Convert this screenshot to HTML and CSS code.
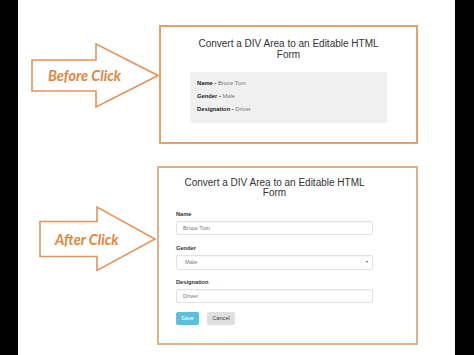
FILE: index.html
```html
<!DOCTYPE html>
<html>
<head>
<meta charset="utf-8">
<link rel="stylesheet" href="styles.css">
</head>
<body>
<div class="slide">
  <div class="row row-before">
    <svg class="arrow" width="141" height="119" viewBox="0 0 141 119">
      <polygon points="14,35 78,35 78,19 140,50.5 78,82 78,66 14,66" fill="#fff" stroke="#e3955a" stroke-width="1.6" stroke-linejoin="miter"/>
      <text x="30" y="55.5" class="arrow-label">Before Click</text>
    </svg>
    <div class="card card-before">
      <div class="inner inner-center">
        <h1 class="title">Convert a DIV Area to an Editable HTML Form</h1>
        <div class="panel">
          <p><b>Name -</b> <span>Bruce Tom</span></p>
          <p><b>Gender -</b> <span>Male</span></p>
          <p><b>Designation -</b> <span>Driver</span></p>
        </div>
      </div>
    </div>
  </div>
  <div class="row row-after">
    <svg class="arrow" width="139" height="179" viewBox="0 0 139 179">
      <polygon points="22,55.5 79,55.5 79,41 137,73 79,104.5 79,90.5 22,90.5" fill="#fff" stroke="#e3955a" stroke-width="1.6" stroke-linejoin="miter"/>
      <text x="37" y="78.5" class="arrow-label">After Click</text>
    </svg>
    <div class="card card-after">
      <form class="inner inner-left">
        <h1 class="title title-sm">Convert a DIV Area to an Editable HTML Form</h1>
        <div class="group">
          <label>Name</label>
          <input class="control" type="text" value="Bruce Tom">
        </div>
        <div class="group">
          <label>Gender</label>
          <div class="select-wrap">
            <select class="control select"><option>Male</option></select>
          </div>
        </div>
        <div class="group">
          <label>Designation</label>
          <input class="control" type="text" value="Driver">
        </div>
        <div class="buttons">
          <button type="button" class="btn btn-save">Save</button>
          <button type="button" class="btn btn-cancel">Cancel</button>
        </div>
      </form>
    </div>
  </div>
</div>
</body>
</html>
```

FILE: styles.css
```css
* { box-sizing: border-box; }
html, body { margin: 0; padding: 0; }
body {
  background: #000;
  width: 474px;
  height: 355px;
  overflow: hidden;
  font-family: "Liberation Sans", Arial, sans-serif;
}
.slide {
  margin-left: 18px;
  width: 437px;
  height: 355px;
  background: #fff;
  padding-top: 25px;
  display: flex;
  flex-direction: column;
  gap: 22px;
}
.row {
  display: flex;
  align-items: flex-start;
}
.arrow { display: block; flex: none; }
.arrow-label {
  font-family: Lato, "Open Sans", sans-serif;
  font-weight: 700;
  font-style: italic;
  font-size: 14.5px;
  fill: #e0863c;
}
.card {
  background: #fff;
  flex: none;
}
.card-before {
  width: 259px;
  height: 119px;
  border: 2px solid #e6a266;
  padding-top: 10.5px;
}
.card-after {
  width: 261px;
  height: 179px;
  border: 2px solid #dcb482;
  padding-top: 9.5px;
  padding-left: 17px;
}
.inner { width: 197px; margin: 0; }
.inner-center { margin: 0 auto; }
.title {
  margin: 0;
  font-weight: 400;
  font-size: 10px;
  line-height: 11px;
  color: #333;
  text-align: center;
  padding: 0 6px;
}
.title-sm { line-height: 10.5px; }
.panel {
  margin-top: 12.5px;
  background: #f0f0f0;
  height: 51px;
  padding: 5px 7px 0;
}
.panel p {
  margin: 0;
  font-size: 5.8px;
  line-height: 13px;
  color: #777;
}
.panel b { color: #222; }
.group { margin-bottom: 8.5px; }
.group:first-of-type { margin-top: 11.5px; }
.group label {
  display: block;
  font-size: 5.7px;
  font-weight: 700;
  line-height: 8px;
  color: #333;
  margin-bottom: 3px;
}
.control {
  display: block;
  width: 197px;
  height: 14px;
  margin: 0;
  padding: 0 6px;
  border: 1px solid #e2e2e2;
  border-radius: 2px;
  background: #fff;
  font-family: "Liberation Sans", Arial, sans-serif;
  font-size: 5.7px;
  color: #777;
  -webkit-appearance: none;
  appearance: none;
  outline: none;
  box-shadow: inset 0 1px 1px rgba(0,0,0,0.04);
}
.select-wrap { position: relative; }
.select { height: 15px; padding-left: 8px; }
.select-wrap::after {
  content: "";
  position: absolute;
  right: 5px;
  top: 6.5px;
  width: 0;
  height: 0;
  border-left: 1.5px solid transparent;
  border-right: 1.5px solid transparent;
  border-top: 2.5px solid #555;
}
.buttons {
  display: flex;
  gap: 8px;
  margin-top: 9px;
}
.btn {
  height: 13px;
  padding: 0;
  border: none;
  border-radius: 2px;
  font-family: "Liberation Sans", Arial, sans-serif;
  font-size: 5.7px;
  line-height: 13px;
}
.btn-save { width: 23px; background: #5bc0de; color: #fff; }
.btn-cancel { width: 28px; background: #e0e0e0; color: #444; }
```
